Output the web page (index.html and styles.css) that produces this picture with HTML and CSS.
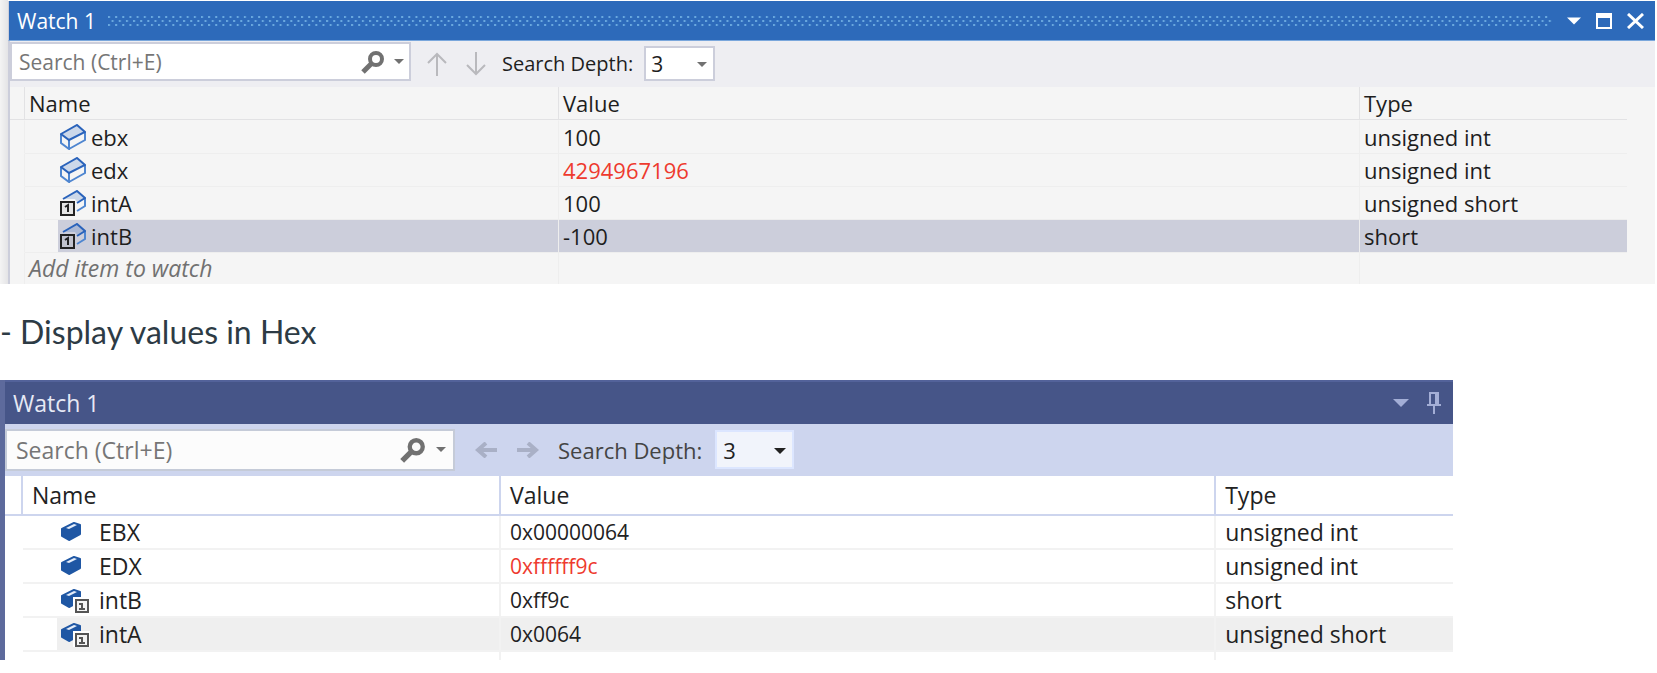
FILE: index.html
```html
<!DOCTYPE html>
<html lang="en">
<head>
    <meta charset="utf-8">
    <title>Watch window</title>
    <link rel="stylesheet" href="styles.css">
</head>
<body>
    <svg class="sprite" aria-hidden="true">
        <symbol id="search" viewBox="0 0 24 24">
            <circle cx="15" cy="9" r="6" fill="none" stroke="currentColor" stroke-width="4"/>
            <path d="M11 13 2 22" stroke="currentColor" stroke-width="5"/>
        </symbol>
        <symbol id="down" viewBox="0 0 12 6">
            <path d="M0 0h12L6 6z" fill="currentColor"/>
        </symbol>
        <symbol id="box" viewBox="0 0 26 26">
            <path d="M1 10 17 1 25 8 9 16z" fill="#ccd8ea"/>
            <path d="M1 10v9l8 6v-9M9 25l16-9V8" fill="none" stroke="#4f86d0" stroke-width="2"/>
            <path d="M1 10 17 1 25 8 9 16z" fill="none" stroke="#2a63bb" stroke-width="2"/>
        </symbol>
        <symbol id="box-one" viewBox="0 0 26 26">
            <path d="M3 9 17 1 25 8 17 12 15 9z" fill="#2a63bb" fill-opacity=".2"/>
            <path d="M25 8v8l-8 5" fill="none" stroke="#4f86d0" stroke-width="2"/>
            <path d="M3 9 17 1 25 8 17 13" fill="none" stroke="#2a63bb" stroke-width="2"/>
            <path d="M1 12h13v13H1z" fill="#888" fill-opacity=".15" stroke="#222" stroke-width="2"/>
            <path d="M5 17 8 15v7" fill="none" stroke="#222" stroke-width="2"/>
        </symbol>
        <symbol id="cube" viewBox="0 0 30 26">
            <path d="M2 10 14 4l6 2v9l-11 6-7-4z" fill="#1f57a4" stroke="#1f57a4" stroke-width="2" stroke-linejoin="round"/>
            <path d="M6 9 14 5l3 1-8 4z" fill="#e6eefa"/>
        </symbol>
        <symbol id="cube-one" viewBox="0 0 30 26">
            <path d="M2 9 14 3l6 2v9l-11 6-7-4z" fill="#1f57a4" stroke="#1f57a4" stroke-width="2" stroke-linejoin="round"/>
            <path d="M6 8 14 4l3 1-8 4z" fill="#e6eefa"/>
            <path d="M13 10h17v16H13z" fill="#fff"/>
            <path d="M16 13h12v12H16z" fill="#f4f4f4" stroke="#555" stroke-width="2"/>
            <path d="M19 17h3v5M19 22h6" fill="none" stroke="#555" stroke-width="2"/>
        </symbol>
    </svg>

    <section class="watch light">
        <header class="titlebar">
            <h2>Watch 1</h2>
            <svg class="grip" aria-hidden="true">
                <defs>
                    <pattern id="dots" width="7.15" height="9" patternUnits="userSpaceOnUse">
                        <path d="M0 0h2v2H0zM3.6 4h2v2H3.6zM0 8h2v2H0z" fill="#6aa9df"/>
                    </pattern>
                </defs>
                <rect width="100%" height="100%" fill="url(#dots)"/>
            </svg>
            <button type="button" aria-label="Window position"><svg width="14" height="8"><use href="#down"/></svg></button>
            <button type="button" aria-label="Maximize"><svg width="16" height="16" viewBox="0 0 16 16"><path d="M1 1h14v14H1z" fill="none" stroke="#fff" stroke-width="2"/><path d="M0 0h16v5H0z" fill="#fff"/></svg></button>
            <button type="button" aria-label="Close"><svg width="17" height="16" viewBox="0 0 17 16"><path d="M1 1 16 15M16 1 1 15" stroke="#fff" stroke-width="3"/></svg></button>
        </header>
        <div class="toolbar">
            <div class="search">
                <input type="text" placeholder="Search (Ctrl+E)" aria-label="Search">
                <button type="button" aria-label="Find"><svg width="24" height="24"><use href="#search"/></svg></button>
                <button type="button" aria-label="Search options"><svg width="10" height="5"><use href="#down"/></svg></button>
            </div>
            <button class="step" type="button" aria-label="Find previous"><svg width="20" height="24" viewBox="0 0 20 24"><path d="M10 24V2M1 11l9-9 9 9" fill="none" stroke="#b9b9bd" stroke-width="2"/></svg></button>
            <button class="step" type="button" aria-label="Find next"><svg width="20" height="24" viewBox="0 0 20 24"><path d="M10 0v22M1 13l9 9 9-9" fill="none" stroke="#b9b9bd" stroke-width="2"/></svg></button>
            <label for="depth1">Search Depth:</label>
            <div class="depth">
                <select id="depth1"><option>3</option></select>
                <svg width="10" height="5"><use href="#down"/></svg>
            </div>
        </div>
        <div class="grid">
            <table>
                <colgroup><col class="gutter"><col class="name"><col><col class="type"></colgroup>
                <thead>
                    <tr><th></th><th>Name</th><th>Value</th><th>Type</th></tr>
                </thead>
                <tbody>
                    <tr><td></td><td><span class="item"><svg><use href="#box"/></svg>ebx</span></td><td>100</td><td>unsigned int</td></tr>
                    <tr><td></td><td><span class="item"><svg><use href="#box"/></svg>edx</span></td><td class="changed">4294967196</td><td>unsigned int</td></tr>
                    <tr><td></td><td><span class="item"><svg><use href="#box-one"/></svg>intA</span></td><td>100</td><td>unsigned short</td></tr>
                    <tr class="selected"><td></td><td><span class="item"><svg><use href="#box-one"/></svg>intB</span></td><td>-100</td><td>short</td></tr>
                    <tr class="add"><td></td><td>Add item to watch</td><td></td><td></td></tr>
                </tbody>
            </table>
        </div>
    </section>

    <p class="note">- Display values in Hex</p>

    <section class="watch blue">
        <header class="titlebar">
            <h2>Watch 1</h2>
            <button type="button" aria-label="Window position"><svg width="16" height="8"><use href="#down"/></svg></button>
            <button type="button" aria-label="Pin"><svg width="14" height="22" viewBox="0 0 14 22"><path d="M3 13V1h8v12M0 13h14M7 13v9" fill="none" stroke="currentColor" stroke-width="2"/><path d="M8 1h3v12H8z" fill="currentColor"/></svg></button>
        </header>
        <div class="toolbar">
            <div class="search">
                <input type="text" placeholder="Search (Ctrl+E)" aria-label="Search">
                <button type="button" aria-label="Find"><svg width="26" height="26"><use href="#search"/></svg></button>
                <button type="button" aria-label="Search options"><svg width="10" height="5"><use href="#down"/></svg></button>
            </div>
            <button class="step" type="button" aria-label="Find previous"><svg width="22" height="16" viewBox="0 0 22 16"><path d="M22 8H3M11 1 3 8l8 7" fill="none" stroke="#a9b0c6" stroke-width="4"/></svg></button>
            <button class="step" type="button" aria-label="Find next"><svg width="22" height="16" viewBox="0 0 22 16"><path d="M0 8h19M11 1l8 7-8 7" fill="none" stroke="#a9b0c6" stroke-width="4"/></svg></button>
            <label for="depth2">Search Depth:</label>
            <div class="depth">
                <select id="depth2"><option>3</option></select>
                <svg width="12" height="6"><use href="#down"/></svg>
            </div>
        </div>
        <div class="grid">
            <table>
                <colgroup><col class="gutter"><col class="name"><col><col class="type"></colgroup>
                <thead>
                    <tr><th></th><th>Name</th><th>Value</th><th>Type</th></tr>
                </thead>
                <tbody>
                    <tr><td></td><td><span class="item"><svg><use href="#cube"/></svg>EBX</span></td><td>0x00000064</td><td>unsigned int</td></tr>
                    <tr><td></td><td><span class="item"><svg><use href="#cube"/></svg>EDX</span></td><td class="changed">0xffffff9c</td><td>unsigned int</td></tr>
                    <tr><td></td><td><span class="item"><svg><use href="#cube-one"/></svg>intB</span></td><td>0xff9c</td><td>short</td></tr>
                    <tr class="selected"><td></td><td><span class="item"><svg><use href="#cube-one"/></svg>intA</span></td><td>0x0064</td><td>unsigned short</td></tr>
                    <tr class="rest"><td></td><td></td><td></td><td></td></tr>
                </tbody>
            </table>
        </div>
    </section>
</body>
</html>
```
FILE: styles.css
```css
* {
    box-sizing: border-box;
}
body {
    margin: 0;
    background: #fff;
    color: #1e1e1e;
    font-family: "Open Sans", "Noto Sans", sans-serif;
    font-size: 22px;
    line-height: 32px;
}
button, input, select {
    margin: 0;
    padding: 0;
    border: 0;
    background: none;
    color: inherit;
    font: inherit;
}
button {
    display: flex;
    align-items: center;
}
svg {
    display: block;
    flex: none;
}
.sprite {
    position: absolute;
    width: 0;
    height: 0;
}

/* title bar */
.titlebar {
    display: flex;
    align-items: center;
    color: #fff;
}
.titlebar h2 {
    margin: 0;
    font-size: 21px;
    font-weight: normal;
}
.grip {
    flex: 1;
    width: 0;
    height: 10px;
    margin-left: 12px;
}

/* search row */
.toolbar {
    display: flex;
    align-items: center;
}
.search {
    display: flex;
    align-items: center;
    border: 2px solid #cccedb;
    background: #fff;
    color: #717171;
}
.search input {
    flex: 1;
    min-width: 0;
    outline: none;
}
.search input::placeholder {
    color: #767676;
    opacity: 1;
}
.depth {
    position: relative;
    border: 2px solid #cccedb;
    background: #fff;
}
.depth select {
    width: 100%;
    height: 100%;
    appearance: none;
}
.depth svg {
    position: absolute;
    right: 6px;
    top: 14px;
    color: #717171;
    pointer-events: none;
}

/* variables */
table {
    width: 100%;
    table-layout: fixed;
    border-collapse: separate;
    border-spacing: 0;
}
th, td {
    overflow: hidden;
    text-align: left;
    font-weight: normal;
    white-space: nowrap;
}
.item {
    display: flex;
    align-items: center;
}
.changed {
    color: #ee3a2e;
}

.light {
    padding: 1px 2px 0 8px;
    background: linear-gradient(to right, #f4f4f4, #e4e4e6 8px, #fff 8px);
}
.light .titlebar {
    height: 40px;
    padding: 1px 11px 0 8px;
    border-left: 1px solid #cccedb;
    border-bottom: 1px solid #7aa7dc;
    background: #2d6aba;
}
.light .titlebar button {
    margin-left: 15px;
}
.light .toolbar {
    height: 46px;
    padding-bottom: 5px;
    border-left: 2px solid #cccedb;
    background: #eeeef2;
}
.light .search {
    width: 401px;
    height: 39px;
    padding: 0 5px 0 7px;
    font-size: 21px;
}
.light .search button + button {
    margin-left: 9px;
}
.light .step {
    margin: 5px 0 0 16px;
}
.light .step + .step {
    margin-left: 19px;
}
.light label {
    margin: 5px 11px 0 16px;
    font-size: 20px;
}
.light .depth {
    width: 71px;
    height: 35px;
    margin-top: 4px;
    padding-left: 5px;
    font-size: 21px;
}
.light .grid {
    padding-right: 28px;
    border-left: 2px solid #cccedb;
    background: #f5f5f5;
}
.light .gutter { width: 15px; }
.light .name { width: 534px; }
.light .type { width: 267px; }
.light th, .light td {
    height: 33px;
    padding: 0 4px;
    border-right: 1px solid #ececec;
    border-bottom: 1px solid #ececec;
}
.light tbody td {
    border-top: 1px solid #f5f5f5;
    border-bottom: 0;
    border-right-color: #eee;
}
.light tbody tr + tr td {
    border-top-color: #eee;
}
.light th {
    border-color: #e2e2e4;
}
.light th:last-child, .light td:last-child {
    border-right: 0;
}
.light tbody td:first-child {
    border-top-color: #f5f5f5;
}
.light td:nth-child(2) {
    padding-left: 33px;
}
.light .item {
    padding-left: 2px;
}
.light .item svg {
    width: 26px;
    height: 26px;
    margin-right: 5px;
}
.light .selected td:nth-child(2) {
    background: linear-gradient(to right, #f5f5f5 33px, #cccedb 33px);
}
.light .selected td:nth-child(n+3) {
    background: #cccedb;
}
.light .add td {
    height: 32px;
    color: #717171;
    font-size: 23px;
    font-style: italic;
    line-height: 31px;
}
.light .add td:nth-child(2) {
    padding-left: 4px;
}

.note {
    margin: 0;
    padding: 28px 0;
    color: #2d3b45;
    font-family: Lato, sans-serif;
    font-size: 32px;
    line-height: 40px;
}

.blue {
    width: 87.7%;
    border-left: 5px solid #5d6a9c;
    background: #fff;
    color: #222;
    font-size: 23px;
}
.blue .titlebar {
    height: 44px;
    padding: 0 12px 0 8px;
    border-top: 2px solid #53629a;
    background: #465588;
    color: #a3aed6;
}
.blue .titlebar h2 {
    margin-right: auto;
    color: #e6e9f5;
    font-size: 23px;
}
.blue .titlebar button {
    margin-left: 18px;
}
.blue .toolbar {
    height: 52px;
    padding-bottom: 1px;
    background: #cdd5ee;
}
.blue .search {
    width: 450px;
    height: 42px;
    padding: 0 7px 0 9px;
    border-color: #c5cbd8;
    background: #fcfcfc;
}
.blue .search button + button {
    margin-left: 10px;
}
.blue .step {
    margin-left: 20px;
}
.blue label {
    margin: 0 13px 0 19px;
    color: #444;
    font-size: 22px;
}
.blue .depth {
    width: 79px;
    height: 39px;
    padding-left: 6px;
    border-color: #dce6ff;
    background: #f1f4fb;
    font-size: 22px;
}
.blue .depth svg {
    top: 16px;
    color: #222;
}
.blue .gutter { width: 18px; }
.blue .name { width: 478px; }
.blue .type { width: 237px; }
.blue th {
    height: 40px;
    padding: 0 9px;
    border-right: 2px solid #cdd5ee;
    border-bottom: 2px solid #cdd5ee;
}
.blue td {
    height: 34px;
    padding: 0 9px;
    border-right: 2px solid #f2f2f2;
    border-bottom: 2px solid #f2f2f2;
}
.blue td:nth-child(3) {
    font-size: 21px;
}
.blue th:last-child, .blue td:last-child {
    border-right: 0;
}
.blue td:first-child {
    border-color: transparent;
}
.blue td:nth-child(2) {
    padding-left: 37px;
}
.blue .item svg {
    width: 30px;
    height: 26px;
    margin-right: 9px;
}
.blue .selected td:nth-child(2) {
    background: linear-gradient(to right, #fff 34px, #efefef 34px);
}
.blue .selected td:nth-child(n+3) {
    background: #efefef;
}
.blue .rest td {
    height: 8px;
    border-bottom: 0;
}
```
